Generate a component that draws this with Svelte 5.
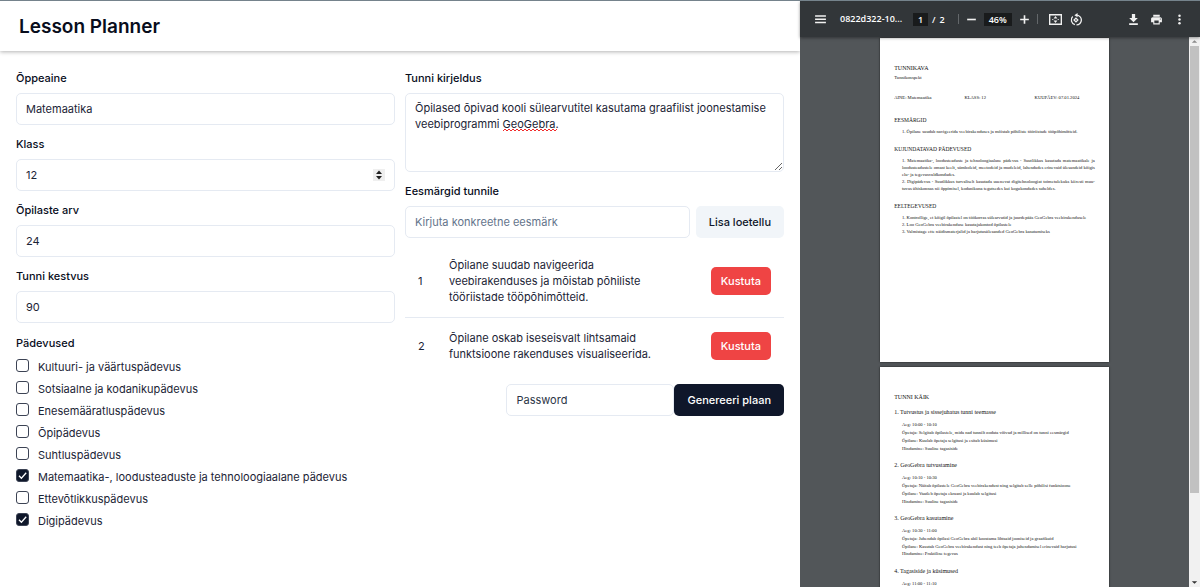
<script>
  let subject = $state("Matemaatika");
  let grade = $state(12);
  let students = $state(24);
  let duration = $state(90);
  let description = $state(
    "Õpilased õpivad kooli sülearvutitel kasutama graafilist joonestamise veebiprogrammi GeoGebra."
  );
  let newGoal = $state("");
  let password = $state("");
  let zoom = $state(46);

  let competencies = $state([
    { name: "Kultuuri- ja väärtuspädevus", checked: false },
    { name: "Sotsiaalne ja kodanikupädevus", checked: false },
    { name: "Enesemääratluspädevus", checked: false },
    { name: "Õpipädevus", checked: false },
    { name: "Suhtluspädevus", checked: false },
    { name: "Matemaatika-, loodusteaduste ja tehnoloogiaalane pädevus", checked: true },
    { name: "Ettevõtlikkuspädevus", checked: false },
    { name: "Digipädevus", checked: true },
  ]);

  let goals = $state([
    "Õpilane suudab navigeerida veebirakenduses ja mõistab põhiliste tööriistade tööpõhimõtteid.",
    "Õpilane oskab iseseisvalt lihtsamaid funktsioone rakenduses visualiseerida.",
  ]);

  const steps = [
    {
      title: "1. Tutvustus ja sissejuhatus tunni teemasse",
      lines: [
        "Aeg: 10:00 - 10:10",
        "Õpetaja: Selgitab õpilastele, mida nad tunnilt oodata võivad ja millised on tunni eesmärgid",
        "Õpilane: Kuulab õpetaja selgitusi ja esitab küsimusi",
        "Hindamine: Suuline tagasiside",
      ],
    },
    {
      title: "2. GeoGebra tutvustamine",
      lines: [
        "Aeg: 10:10 - 10:30",
        "Õpetaja: Näitab õpilastele GeoGebra veebirakendust ning selgitab selle põhilisi funktsioone",
        "Õpilane: Vaatleb õpetaja ekraani ja kuulab selgitusi",
        "Hindamine: Suuline tagasiside",
      ],
    },
    {
      title: "3. GeoGebra kasutamine",
      lines: [
        "Aeg: 10:30 - 11:00",
        "Õpetaja: Juhendab õpilasi GeoGebra abil koostama lihtsaid jooniseid ja graafikuid",
        "Õpilane: Kasutab GeoGebra veebirakendust ning teeb õpetaja juhendamisel erinevaid harjutusi",
        "Hindamine: Praktiline tegevus",
      ],
    },
    {
      title: "4. Tagasiside ja küsimused",
      lines: ["Aeg: 11:00 - 11:10"],
    },
  ];

  function addGoal() {
    if (!newGoal.trim()) return;
    goals.push(newGoal.trim());
    newGoal = "";
  }

  function removeGoal(index) {
    goals.splice(index, 1);
  }
</script>

<div class="screen">
  <main class="planner">
    <header class="title-bar">
      <h1>Lesson Planner</h1>
    </header>

    <form class="form" onsubmit={(e) => e.preventDefault()}>
      <div class="column">
        <div class="field">
          <label for="subject">Õppeaine</label>
          <input id="subject" class="box" type="text" bind:value={subject} />
        </div>
        <div class="field">
          <label for="grade">Klass</label>
          <div class="box number">
            <input id="grade" type="number" bind:value={grade} />
            <span class="stepper">
              <button type="button" aria-label="Suurenda" onclick={() => grade++}>
                <svg viewBox="0 0 12 6"><path d="M3 5 6 1.5 9 5z" /></svg>
              </button>
              <button type="button" aria-label="Vähenda" onclick={() => grade--}>
                <svg viewBox="0 0 12 6"><path d="M3 1 6 4.5 9 1z" /></svg>
              </button>
            </span>
          </div>
        </div>
        <div class="field">
          <label for="students">Õpilaste arv</label>
          <input id="students" class="box" type="number" bind:value={students} />
        </div>
        <div class="field">
          <label for="duration">Tunni kestvus</label>
          <input id="duration" class="box" type="number" bind:value={duration} />
        </div>

        <fieldset>
          <legend>Pädevused</legend>
          {#each competencies as item}
            <label class="check">
              <input type="checkbox" bind:checked={item.checked} />
              <svg class="tick" viewBox="0 0 13 13">
                <path d="M3 6.8 5.4 9.2 10.2 3.8" />
              </svg>
              <span>{item.name}</span>
            </label>
          {/each}
        </fieldset>
      </div>

      <div class="column">
        <div class="field">
          <label for="description">Tunni kirjeldus</label>
          <div class="editor">
            <textarea id="description" spellcheck="false" bind:value={description}></textarea>
            <!-- spelling mark under the unknown word -->
            <svg class="squiggle" viewBox="0 0 54 4">
              <path d="M0 3 2 1 4 3 6 1 8 3 10 1 12 3 14 1 16 3 18 1 20 3 22 1 24 3 26 1 28 3 30 1 32 3 34 1 36 3 38 1 40 3 42 1 44 3 46 1 48 3 50 1 52 3 54 1" />
            </svg>
          </div>
        </div>

        <div class="field">
          <label for="goal">Eesmärgid tunnile</label>
          <div class="add-row">
            <input
              id="goal"
              class="box"
              type="text"
              placeholder="Kirjuta konkreetne eesmärk"
              bind:value={newGoal}
            />
            <button class="btn light" type="button" onclick={addGoal}>Lisa loetellu</button>
          </div>
          <table>
            <tbody>
              {#each goals as goal, i}
                <tr>
                  <td class="nr">{i + 1}</td>
                  <td>{goal}</td>
                  <td class="action">
                    <button class="btn danger" type="button" onclick={() => removeGoal(i)}>Kustuta</button>
                  </td>
                </tr>
              {/each}
            </tbody>
          </table>
          <div class="submit-row">
            <input
              class="box password"
              type="password"
              placeholder="Password"
              aria-label="Password"
              bind:value={password}
            />
            <button class="btn dark" type="submit">Genereeri plaan</button>
          </div>
        </div>
      </div>
    </form>
  </main>

  <section class="viewer">
    <div class="toolbar">
      <button class="icon" aria-label="Menu">
        <svg viewBox="0 0 24 24"><path d="M2 19h20v-3H2v3zm0-6h20v-3H2v3zm0-9v3h20V4H2z" /></svg>
      </button>
      <span class="filename">0822d322-10...</span>
      <div class="controls">
        <div class="pages">
          <input class="page-nr" type="text" value="1" aria-label="Page" />
          <span>/</span>
          <span>2</span>
        </div>
        <span class="divider"></span>
        <button class="icon" aria-label="Zoom out" onclick={() => (zoom -= 5)}>
          <svg viewBox="0 0 24 24"><path d="M20 13.500H4v-3h16v3z" /></svg>
        </button>
        <input class="zoom" type="text" value="{zoom}%" aria-label="Zoom" />
        <button class="icon" aria-label="Zoom in" onclick={() => (zoom += 5)}>
          <svg viewBox="0 0 24 24"><path d="M20 13.500h-6.500V20h-3v-6.500H4v-3h6.500V4h3v6.500H20z" /></svg>
        </button>
        <span class="divider"></span>
        <div class="view-icons">
          <button class="icon" aria-label="Fit to page">
            <svg viewBox="0 0 24 24">
              <path d="M24 2H0v20h24V2zm-2.500 17.500h-19v-15h19v15z" />
              <path d="M12 5.500 8.500 10h7zM12 18.500 8.500 14h7zM6 11h2v2H6zm10 0h2v2h-2z" />
            </svg>
          </button>
          <button class="icon" aria-label="Rotate">
            <svg viewBox="0 0 24 24">
              <path class="line" d="M11 9.500 14.500 13 11 16.500 7.500 13zM12 4a9 9 0 0 1 0 18" />
              <path class="line" d="M9 21.500A9 9 0 0 1 5 6.500" />
              <path d="M14 0v8L8 4z" />
            </svg>
          </button>
        </div>
      </div>
      <div class="actions">
        <button class="icon" aria-label="Download">
          <svg viewBox="0 0 24 24"><path d="M20 9h-5V2H9v7H4l8 8 8-8zM4 19v3h16v-3H4z" /></svg>
        </button>
        <button class="icon" aria-label="Print">
          <svg viewBox="0 0 24 24">
            <path d="M19 8H5c-1.660 0-3 1.340-3 3v6h4v4h12v-4h4v-6c0-1.660-1.340-3-3-3zm-3 11H8v-5h8v5zm3-7c-.550 0-1-.450-1-1s.450-1 1-1 1 .450 1 1-.450 1-1 1zm-1-9H6v4h12V3z" />
          </svg>
        </button>
        <button class="icon" aria-label="More">
          <svg viewBox="0 0 24 24">
            <circle cx="12" cy="5" r="2.300" /><circle cx="12" cy="12" r="2.300" /><circle cx="12" cy="19" r="2.300" />
          </svg>
        </button>
      </div>
    </div>

    <div class="document">
      <div class="sheets">
        <article class="sheet" style:zoom={zoom / 100}>
          <h2>TUNNIKAVA</h2>
          <p class="subtitle">Tunnikonspekt</p>
          <div class="meta">
            <span>AINE: Matemaatika</span>
            <span>KLASS: 12</span>
            <span>KUUPÄEV: 07.01.2024</span>
          </div>
          <h3>EESMÄRGID</h3>
          <div class="items">
            <p>1. Õpilane suudab navigeerida veebirakenduses ja mõistab põhiliste tööriistade tööpõhimõtteid.</p>
          </div>
          <h3>KUJUNDATAVAD PÄDEVUSED</h3>
          <div class="items">
            <p>1. Matemaatika-, loodusteaduste ja tehnoloogiaalane pädevus - Suutlikkus kasutada matemaatikale ja loodusteadustele omast keelt, sümboleid, meetodeid ja mudeleid, lahendades erinevaid ülesandeid kõigis elu- ja tegevusvaldkondades.</p>
            <p>2. Digipädevus - Suutlikkus turvaliselt kasutada uuenevat digitehnoloogiat toimetulekuks kiiresti muu&shy;tuvas ühiskonnas nii õppimisel, kodanikuna tegutsedes kui kogukondades suheldes.</p>
          </div>
          <h3>EELTEGEVUSED</h3>
          <div class="items">
            <p>1. Kontrollige, et kõigil õpilastel on töökorras sülearvutid ja juurdepääs GeoGebra veebirakendusele</p>
            <p>2. Loo GeoGebra veebirakenduse kasutajakontod õpilastele</p>
            <p>3. Valmistage ette näidismaterjalid ja harjutusülesanded GeoGebra kasutamiseks</p>
          </div>
        </article>

        <article class="sheet" style:zoom={zoom / 100}>
          <h2>TUNNI KÄIK</h2>
          {#each steps as step}
            <section class="step">
              <h4>{step.title}</h4>
              {#each step.lines as line}
                <p>{line}</p>
              {/each}
            </section>
          {/each}
        </article>
      </div>

      <div class="scrollbar">
        <svg viewBox="0 0 10 9"><path d="M2 6 5 3 8 6z" fill="#8b8b8b" /></svg>
        <div class="track"><div class="thumb"></div></div>
        <svg viewBox="0 0 10 9"><path d="M2 3 5 6 8 3z" fill="#333" /></svg>
      </div>
    </div>
  </section>
</div>

<style>
  :global(body) {
    margin: 0;
  }

  .screen {
    display: grid;
    grid-template-columns: 2fr 1fr;
    height: 100vh;
    box-sizing: border-box;
    border-top: 1px solid #75838c;
    overflow: hidden;
    font-family: Inter, "Liberation Sans", sans-serif;
    font-size: 11px;
    line-height: 16px;
    color: #1b2436;
    background: #fff;
  }

  .screen * {
    box-sizing: border-box;
  }

  h1, h2, h3, h4, p {
    margin: 0;
  }

  button, input, textarea {
    font: inherit;
    color: inherit;
    margin: 0;
  }

  button {
    cursor: pointer;
    border: 0;
    padding: 0;
  }

  /* PLANNER */
  .planner {
    min-width: 0;
  }

  .title-bar {
    padding: 14px 19px 12px;
    box-shadow: 0 1px 4px rgba(0, 0, 0, 0.3);
  }

  h1 {
    font-size: 19px;
    line-height: 24px;
    font-weight: 600;
    color: #080d1c;
  }

  .form {
    display: grid;
    grid-template-columns: 1fr 1fr;
    gap: 10px;
    padding: 19px 16px;
  }

  .column,
  .field {
    display: flex;
    flex-direction: column;
    min-width: 0;
  }

  .column {
    gap: 11px;
  }

  .field {
    gap: 7px;
  }

  .field > label,
  legend {
    font-weight: 500;
    color: #080d1c;
  }

  .box {
    width: 100%;
    height: 32px;
    padding: 0 9px;
    border: 1px solid #e5eaf2;
    border-radius: 5px;
    background: #fff;
    outline: none;
  }

  .box::placeholder {
    color: #64748b;
    opacity: 1;
  }

  input[type="number"] {
    appearance: textfield;
  }

  .number {
    display: flex;
    align-items: center;
  }

  .number input {
    flex: 1;
    min-width: 0;
    padding: 0;
    border: 0;
    outline: none;
  }

  .stepper {
    display: flex;
    flex-direction: column;
    width: 12px;
    background: #efefef;
  }

  .stepper button {
    display: flex;
    height: 6px;
    background: none;
  }

  .stepper svg {
    width: 12px;
    height: 6px;
    fill: #222;
  }

  fieldset {
    border: 0;
    margin: 0;
    padding: 0;
    min-width: 0;
  }

  legend {
    padding: 1px 0 8px;
  }

  .check {
    display: grid;
    grid-template-columns: 13px 1fr;
    column-gap: 9px;
    height: 22px;
  }

  .check input,
  .tick {
    grid-area: 1 / 1;
    width: 13px;
    height: 13px;
  }

  .check input {
    appearance: none;
    border: 1px solid #3c4354;
    border-radius: 3px;
  }

  .check input:checked {
    background: #0f172a;
  }

  .tick {
    fill: none;
    stroke: #fff;
    stroke-width: 1.3;
    pointer-events: none;
  }

  .editor {
    position: relative;
    display: flex;
  }

  textarea {
    width: 100%;
    height: 79px;
    padding: 6px 9px;
    border: 1px solid #e5eaf2;
    border-radius: 5px;
    resize: vertical;
    outline: none;
  }

  .squiggle {
    position: absolute;
    left: 98px;
    top: 35px;
    width: 54px;
    height: 4px;
    fill: none;
    stroke: #f02b2b;
    pointer-events: none;
  }

  .add-row {
    display: flex;
    gap: 6px;
  }

  .add-row .box {
    flex: 1;
    min-width: 0;
  }

  .btn {
    flex: none;
    height: 32px;
    padding: 0 13px;
    border-radius: 5px;
    font-weight: 500;
  }

  .light {
    background: #f1f5f9;
    color: #0f172a;
  }

  .danger {
    height: 28px;
    padding: 0 10px;
    background: #ef4444;
    color: #fff;
  }

  .dark {
    background: #0f172a;
    color: #fff;
  }

  table {
    width: 100%;
    border-collapse: collapse;
  }

  tr + tr {
    border-top: 1px solid #e5eaf2;
  }

  td {
    padding: 12px 13px;
    vertical-align: middle;
  }

  .nr {
    width: 31px;
    padding-right: 0;
  }

  .action {
    width: 86px;
  }

  .action .btn {
    display: block;
  }

  .submit-row {
    display: flex;
    justify-content: flex-end;
    padding-top: 3px;
  }

  .password {
    width: 168px;
  }

  .password::placeholder {
    color: #2b3546;
  }

  /* PDF VIEWER */
  .viewer {
    display: flex;
    flex-direction: column;
    min-width: 0;
    min-height: 0;
    background: #525659;
  }

  .toolbar {
    display: flex;
    align-items: center;
    height: 36px;
    flex: none;
    padding: 0 14px;
    background: #323639;
    color: #fff;
    font-family: "Open Sans", "Liberation Sans", sans-serif;
    font-size: 9px;
    font-weight: 600;
    position: relative;
    box-shadow: 0 1px 3px rgba(0, 0, 0, 0.4);
  }

  .icon {
    display: flex;
    flex: none;
    background: none;
  }

  .icon svg {
    width: 13px;
    height: 13px;
    fill: #f1f1f1;
  }

  .icon .line {
    fill: none;
    stroke: #f1f1f1;
    stroke-width: 2.4;
  }

  .filename {
    flex: none;
    width: 60px;
    margin: 0 13px;
    white-space: nowrap;
  }

  .controls {
    display: flex;
    align-items: center;
    gap: 6px;
  }

  .pages {
    display: flex;
    gap: 4px;
    margin-right: 7px;
  }

  .page-nr,
  .zoom {
    height: 13px;
    padding: 0;
    border: 0;
    background: #191b1c;
    text-align: center;
    line-height: 13px;
  }

  .page-nr {
    width: 15px;
  }

  .pages span {
    line-height: 13px;
  }

  .zoom {
    width: 28px;
  }

  .divider {
    width: 1px;
    height: 10px;
    background: #63676a;
  }

  .view-icons {
    display: flex;
    gap: 8px;
    padding-left: 5px;
  }

  .actions {
    display: flex;
    gap: 10px;
    margin-left: auto;
  }

  .document {
    display: flex;
    flex: 1;
    min-height: 0;
  }

  .sheets {
    flex: 1;
    display: flex;
    flex-direction: column;
    align-items: center;
    gap: 5px;
    padding-top: 1px;
    overflow: hidden;
  }

  /* sizes on the sheet are for 100%, the viewer zooms it */
  .sheet {
    flex: none;
    width: 498px;
    aspect-ratio: 210 / 297;
    padding: 59px 31px 0;
    background: #fff;
    box-shadow: 0 0 4px rgba(0, 0, 0, 0.7);
    font-family: "Liberation Serif", serif;
    font-size: 10px;
    line-height: 15px;
    color: #111;
  }

  h2, h3, h4 {
    font-weight: 400;
    line-height: 16px;
  }

  h2, h4 {
    font-size: 13px;
  }

  h3 {
    font-size: 12px;
  }

  h3, h4 {
    margin-bottom: 10px;
  }

  .subtitle {
    margin-top: 6px;
  }

  .meta {
    display: grid;
    grid-template-columns: 35% 35% auto;
    margin: 29px 0 31px;
  }

  .items {
    padding-left: 17px;
    margin-bottom: 23px;
    text-align: justify;
  }

  .step {
    margin-top: 17px;
    padding-bottom: 4px;
  }

  .step p {
    padding-left: 17px;
    line-height: 17px;
  }

  .scrollbar {
    flex: none;
    display: flex;
    flex-direction: column;
    width: 11px;
    padding: 0 1px;
    background: #f1f1f1;
  }

  .scrollbar svg {
    height: 9px;
  }

  .track {
    flex: 1;
  }

  .thumb {
    height: 84%;
    background: #c1c1c1;
  }
</style>
